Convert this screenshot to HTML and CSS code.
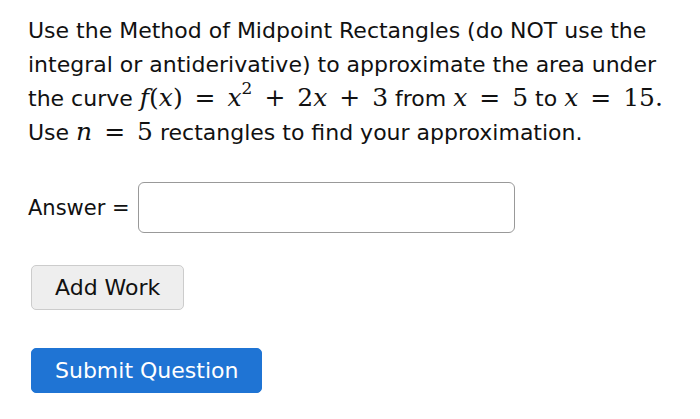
FILE: index.html
```html
<!DOCTYPE html>
<html lang="en">
<head>
    <meta charset="UTF-8">
    <title>Midpoint Rectangles</title>
    <link rel="stylesheet" href="styles.css">
</head>
<body>
    <div class="problem">
        <p class="question">
            Use the Method of Midpoint Rectangles (do NOT use the<br>
            integral or antiderivative) to approximate the area under<br>
            the curve <span class="math"><i>f</i>(<i>x</i>) <span class="op">=</span> <i>x</i><sup>2</sup> <span class="op">+</span> 2<i>x</i> <span class="op">+</span> 3</span> from <span class="math"><i>x</i> <span class="op">=</span> 5</span> to <span class="math"><i>x</i> <span class="op">=</span> 15.</span><br>
            Use <span class="math"><i>n</i> <span class="op">=</span> 5</span> rectangles to find your approximation.
        </p>

        <div class="answer-row">
            <label for="answer">Answer =</label>
            <input id="answer" type="text">
        </div>

        <div class="actions">
            <button class="btn">Add Work</button>
            <button class="btn primary">Submit Question</button>
        </div>
    </div>
</body>
</html>
```

FILE: styles.css
```css
body {
    margin: 0;
    background: #fff;
    color: #111;
    font-family: "DejaVu Sans", "Noto Sans", sans-serif;
}
.problem {
    padding: 14px 0 0 28px;
}
.question {
    margin: 0;
    white-space: nowrap;
    font-size: 22px;
    line-height: 34px;
}
.math {
    font-family: "DejaVu Serif", "Liberation Serif", serif;
    font-size: 25px;
    line-height: 0;
}
.math i {
    font-style: italic;
}
.math .op {
    padding: 0 4px;
}
.math sup {
    font-size: 17px;
    line-height: 0;
    vertical-align: 12px;
}
.answer-row {
    display: flex;
    align-items: center;
    gap: 8px;
    margin-top: 32px;
    font-size: 21px;
}
.answer-row input {
    width: 377px;
    height: 51px;
    box-sizing: border-box;
    border: 1px solid #999;
    border-radius: 6px;
    font-size: 20px;
}
.actions {
    display: flex;
    flex-direction: column;
    align-items: flex-start;
    gap: 38px;
    margin-top: 32px;
    padding-left: 3px;
}
.btn {
    font-family: inherit;
    font-size: 22px;
    height: 45px;
    padding: 0 23px;
    color: #111;
    background: #eee;
    border: 1px solid #ccc;
    border-radius: 5px;
}
.btn.primary {
    color: #fff;
    background: #1f74d4;
    border-color: #1f74d4;
}
```
